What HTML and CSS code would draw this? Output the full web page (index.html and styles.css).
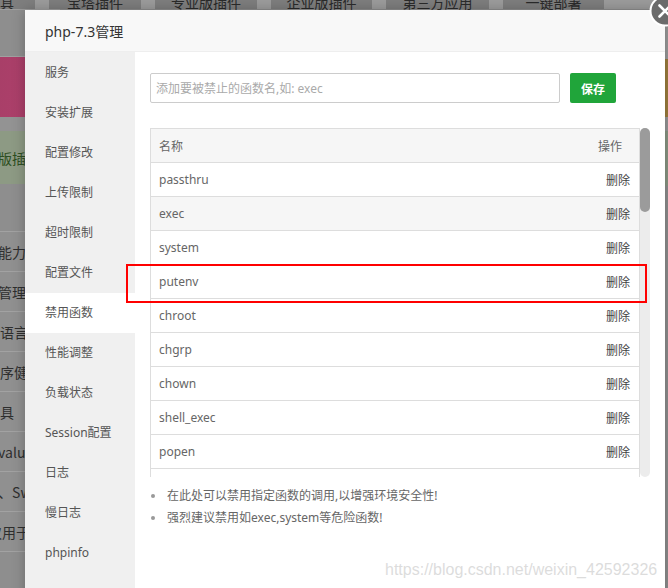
FILE: index.html
```html
<!DOCTYPE html>
<html lang="zh-CN">
<head>
<meta charset="utf-8">
<title>php-7.3管理</title>
<link rel="stylesheet" href="styles.css">
</head>
<body>
<div class="page">
  <div class="topnav">
    <div class="tab t0">工具</div>
    <div class="tab t1">宝塔插件</div>
    <div class="tab t2">专业版插件</div>
    <div class="tab t3">企业版插件</div>
    <div class="tab t4">第三方应用</div>
    <div class="tab t5">一键部署</div>
  </div>
  <div class="bgbody">
    <div class="bgleft">
      <div class="bgrow r-top"></div>
      <div class="bgrow r-pink"></div>
      <div class="bgrow r-gap"></div>
      <div class="bgrow r-green"><span>专业版插件</span></div>
      <div class="bgrow r-gap2"></div>
      <div class="bgrow r-line s28"><span>高性能力</span></div>
      <div class="bgrow r-line s28"><span>服务管理器</span></div>
      <div class="bgrow r-line s14"><span>多语言</span></div>
      <div class="bgrow r-line s14"><span>程序健康</span></div>
      <div class="bgrow r-line s14"><span>工具</span></div>
      <div class="bgrow r-line s24"><span>Keyvalue</span></div>
      <div class="bgrow r-line s28b"><span>SSL、Swoole</span></div>
      <div class="bgrow r-line s16"><span>仅用于</span></div>
    </div>
    <div class="bgright">
      <div class="rb rb1"></div>
      <div class="rb rb2"></div>
      <div class="rb rb3"></div>
      <div class="rb rb4"></div>
    </div>
  </div>
</div>

<div class="dialog">
  <div class="dlg-head">php-7.3管理</div>
  <div class="dlg-main">
    <ul class="sidebar">
      <li>服务</li>
      <li>安装扩展</li>
      <li>配置修改</li>
      <li>上传限制</li>
      <li>超时限制</li>
      <li>配置文件</li>
      <li class="active">禁用函数</li>
      <li>性能调整</li>
      <li>负载状态</li>
      <li>Session配置</li>
      <li>日志</li>
      <li>慢日志</li>
      <li>phpinfo</li>
    </ul>
    <div class="content">
      <div class="addrow">
        <input class="fn-input" type="text" placeholder="添加要被禁止的函数名,如: exec">
        <button class="btn-save">保存</button>
      </div>
      <div class="tablewrap">
        <div class="tableview">
          <div class="table">
            <div class="tr th"><span>名称</span><span class="op">操作</span></div>
            <div class="tr"><span>passthru</span><span class="del">删除</span></div>
            <div class="tr gray"><span>exec</span><span class="del">删除</span></div>
            <div class="tr"><span>system</span><span class="del">删除</span></div>
            <div class="tr"><span>putenv</span><span class="del">删除</span></div>
            <div class="tr"><span>chroot</span><span class="del">删除</span></div>
            <div class="tr"><span>chgrp</span><span class="del">删除</span></div>
            <div class="tr"><span>chown</span><span class="del">删除</span></div>
            <div class="tr"><span>shell_exec</span><span class="del">删除</span></div>
            <div class="tr"><span>popen</span><span class="del">删除</span></div>
            <div class="tr"></div>
          </div>
        </div>
        <div class="scrollbar"><div class="thumb"></div></div>
      </div>
      <ul class="notes">
        <li>在此处可以禁用指定函数的调用,以增强环境安全性!</li>
        <li>强烈建议禁用如exec,system等危险函数!</li>
      </ul>
    </div>
  </div>
  <div class="close">
    <svg width="32" height="32" viewBox="0 0 32 32"><circle cx="16" cy="16" r="14.5" fill="#6b6b6b" stroke="#fff" stroke-width="2"/><path d="M10.5 10.5 L21.5 21.5 M21.5 10.5 L10.5 21.5" stroke="#fff" stroke-width="2.6" stroke-linecap="round"/></svg>
  </div>
</div>

<div class="redbox"></div>
<div class="watermark">https://blog.csdn.net/weixin_42592326</div>
</body>
</html>
```

FILE: styles.css
```css
* { box-sizing: border-box; }
html, body { margin: 0; padding: 0; }
body {
  width: 668px;
  height: 588px;
  overflow: hidden;
  background: #8e8e8e;
  font-family: "Noto Sans", "Noto Sans CJK SC", sans-serif;
  position: relative;
}
.page { width: 668px; height: 588px; overflow: hidden; }
.topnav {
  display: flex;
  height: 32px;
  margin-top: -23px;
  background: #9c9c9c;
}
.tab {
  height: 32px;
  background: #7e7e7e;
  color: #2a2a2a;
  font-size: 14px;
  line-height: 14px;
  display: flex;
  align-items: flex-end;
  justify-content: center;
  margin-right: 14px;
  font-family: "Noto Sans CJK SC", sans-serif;
}
.t0 { width: 35px; justify-content: flex-start; text-indent: -14px; overflow: hidden; }
.t1 { width: 92px; }
.t2 { width: 102px; }
.t3 { width: 101px; }
.t4 { width: 103px; }
.t5 { width: 101px; }

.bgbody { display: flex; justify-content: space-between; }
.bgleft { width: 60px; }
.bgrow { position: relative; overflow: hidden; white-space: nowrap; font-size: 14px; color: #2e2e2e; font-family: "Noto Sans CJK SC", sans-serif; }
.r-top { height: 48px; background: #8e8e8e; border-top: 1px solid #9e9e9e; border-bottom: 1px solid #a0a0a0; }
.r-pink { height: 60px; background: linear-gradient(100deg, #a83f68, #b2406d); }
.r-gap { height: 14px; background: #939393; }
.r-green { height: 53px; background: #8d9a84; color: #2e4f22; display: flex; align-items: center; }
.r-green span { margin-left: -30px; }
.r-gap2 { height: 48px; background: #8e8e8e; border-bottom: 1px solid #a2a2a2; }
.r-line { height: 40px; border-bottom: 1px solid #a2a2a2; display: flex; align-items: center; background: #909090; }
.s28 span { margin-left: -30px; }
.s14 span { margin-left: -14px; }
.s16 span { margin-left: -12px; }
.s24 span { margin-left: -26px; }
.s28b span { margin-left: -26px; }

.bgright { width: 10px; }
.rb { width: 10px; }
.rb1 { height: 50px; background: #9a9a9a; }
.rb2 { height: 58px; background: #9c7d3e; }
.rb3 { height: 14px; background: #969696; }
.rb4 { height: 55px; background: #8a9684; }

.dialog {
  position: absolute;
  left: 25px;
  top: 10px;
  width: 640px;
  height: 600px;
  background: #fff;
  box-shadow: 0 0 12px rgba(0,0,0,0.25);
}
.dlg-head {
  height: 42px;
  background: #f8f8f8;
  border-bottom: 1px solid #eee;
  padding-left: 20px;
  font-size: 14px;
  line-height: 43px;
  color: #333;
}
.dlg-main { display: flex; height: 558px; }
.sidebar {
  list-style: none;
  margin: 0;
  padding: 1px 0 0 0;
  width: 110px;
  background: #f0f0f0;
  flex-shrink: 0;
}
.sidebar li {
  height: 40px;
  line-height: 40px;
  padding-left: 20px;
  font-size: 12px;
  color: #555;
}
.sidebar li.active { background: #fff; }

.content { flex: 1; padding: 21px 15px 0 15px; }
.addrow { display: flex; gap: 10px; height: 30px; }
.fn-input {
  width: 410px;
  height: 30px;
  border: 1px solid #ccc;
  border-radius: 2px;
  padding: 0 5px;
  font-size: 12px;
  font-family: "Noto Sans", "Noto Sans CJK SC", sans-serif;
  color: #333;
  outline: none;
}
.fn-input::placeholder { color: #aaa; }
.btn-save {
  width: 46px;
  height: 30px;
  border: none;
  border-radius: 2px;
  background: #20a53a;
  color: #fff;
  font-size: 12px;
  font-weight: bold;
  font-family: "Noto Sans CJK SC", sans-serif;
  padding: 0;
}
.tablewrap {
  display: flex;
  margin-top: 25px;
  height: 349px;
}
.tableview { width: 490px; height: 349px; overflow: hidden; }
.table { border: 1px solid #ddd; border-bottom: none; }
.tr {
  height: 34px;
  border-bottom: 1px solid #ddd;
  display: flex;
  justify-content: space-between;
  align-items: center;
  padding: 0 8px;
  font-size: 12px;
  color: #666;
  background: #fff;
}
.tr.th { background: #f6f6f6; }
.tr.gray { background: #f6f6f6; }
.tr .op { padding-right: 9px; }
.tr .del { color: #444; padding-right: 1px; }
.scrollbar {
  width: 10px;
  height: 349px;
  background: #ececec;
  border-radius: 5px;
}
.thumb {
  height: 84px;
  width: 10px;
  background: #9b9b9b;
  border-radius: 5px;
}
.notes {
  list-style: none;
  margin: 8px 0 0 0;
  padding: 0;
}
.notes li {
  position: relative;
  padding-left: 17px;
  font-size: 12px;
  line-height: 22px;
  color: #666;
}
.notes li::before {
  content: "";
  position: absolute;
  left: 1px;
  top: 9px;
  width: 4px;
  height: 4px;
  border-radius: 50%;
  background: #999;
}
.close {
  position: absolute;
  left: 624px;
  top: -15px;
  width: 32px;
  height: 32px;
}
.close svg { display: block; }
.redbox {
  position: absolute;
  left: 126px;
  top: 264px;
  width: 521px;
  height: 39px;
  border: 2px solid #f00;
}
.watermark {
  position: absolute;
  left: 385px;
  top: 561px;
  font-family: "Liberation Sans", Arial, sans-serif;
  font-size: 16px;
  color: rgba(205,205,205,0.7);
  white-space: nowrap;
}
```
